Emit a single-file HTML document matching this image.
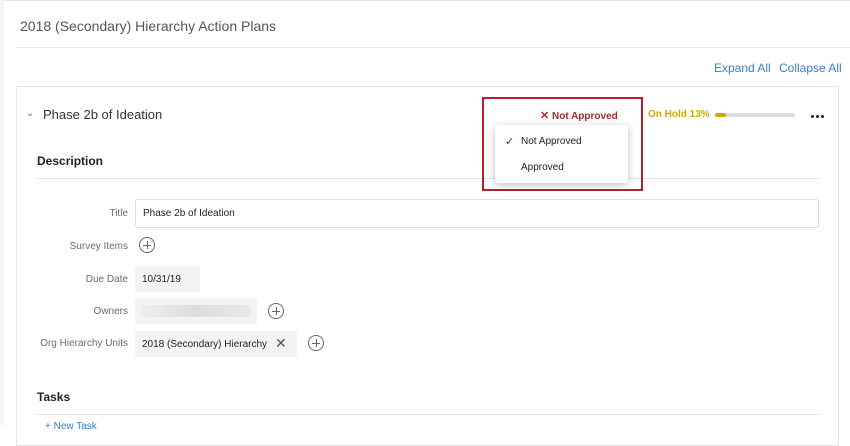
<!DOCTYPE html>
<html><head><style>
*{margin:0;padding:0;box-sizing:border-box}
body{width:850px;height:425px;overflow:hidden;background:#fff;font-family:"Liberation Sans",sans-serif;position:relative;color:#333}
.a{position:absolute;white-space:nowrap}
.lbl{font-size:10px;color:#6b6b6b;text-align:right;width:128px;left:0}
.plus{position:absolute;width:16px;height:16px;border:1px solid #666;border-radius:50%}
.plus:before{content:"";position:absolute;left:3px;top:7px;width:8px;height:1px;background:#666}
.plus:after{content:"";position:absolute;left:7px;top:3px;width:1px;height:8px;background:#666}
.dot{position:absolute;width:3px;height:3px;border-radius:50%;background:#222;top:115px}
</style></head><body>
<div class="a" style="left:0;top:0;width:4px;height:425px;background:#f4f4f4"></div>
<div class="a" style="left:4px;top:0;width:846px;height:1px;background:#e6e6e6"></div>
<div class="a" style="left:20px;top:18px;font-size:14px;color:#555">2018 (Secondary) Hierarchy Action Plans</div>
<div class="a" style="left:16px;top:47px;width:834px;height:1px;background:#e8e8e8"></div>
<div class="a" style="left:714px;top:61px;font-size:12px;color:#3b7fc4">Expand All</div>
<div class="a" style="left:779px;top:61px;font-size:12px;color:#3b7fc4">Collapse All</div>
<div class="a" style="left:16px;top:86px;width:823px;height:360px;border:1px solid #e6e6e6"></div>
<div class="a" style="left:26px;top:108px;font-size:10px;color:#777">&#8964;</div>
<div class="a" style="left:43px;top:107px;font-size:13px;color:#333">Phase 2b of Ideation</div>
<div class="a" style="left:37px;top:154px;font-size:12px;font-weight:bold;color:#222">Description</div>
<div class="a" style="left:37px;top:178px;width:782px;height:1px;background:#e3e3e3"></div>
<div class="a lbl" style="top:208px">Title</div>
<div class="a" style="left:135px;top:199px;width:684px;height:29px;border:1px solid #ddd;border-radius:3px;font-size:10px;padding:8px 7px;color:#222">Phase 2b of Ideation</div>
<div class="a lbl" style="top:241px">Survey Items</div>
<div class="plus" style="left:139px;top:237px"></div>
<div class="a lbl" style="top:274px">Due Date</div>
<div class="a" style="left:135px;top:266px;width:65px;height:26px;background:#f3f3f3;border-radius:2px;font-size:10px;padding:8px 7px;color:#222">10/31/19</div>
<div class="a lbl" style="top:306px">Owners</div>
<div class="a" style="left:135px;top:298px;width:122px;height:26px;background:#f3f3f3;border-radius:2px"><div style="margin:7px 6px;height:12px;background:linear-gradient(90deg,#eee,#ddd,#e8e8e8);border-radius:4px"></div></div>
<div class="plus" style="left:268px;top:303px"></div>
<div class="a lbl" style="top:338px">Org Hierarchy Units</div>
<div class="a" style="left:135px;top:331px;width:162px;height:26px;background:#f3f3f3;border-radius:2px;font-size:10px;padding:8px 7px;color:#222">2018 (Secondary) Hierarchy<span style="position:absolute;left:140px;top:4px;font-size:14px;color:#555">&#10005;</span></div>
<div class="plus" style="left:308px;top:335px"></div>
<div class="a" style="left:37px;top:390px;font-size:12px;font-weight:bold;color:#222">Tasks</div>
<div class="a" style="left:37px;top:414px;width:782px;height:1px;background:#e3e3e3"></div>
<div class="a" style="left:45px;top:421px;font-size:10px;color:#3b7fc4">+ New Task</div>

<div class="a" style="left:540px;top:109px;font-size:10px;color:#a52a2a;font-weight:bold"><span style="font-size:11px">&#10005;</span> Not Approved</div>
<div class="a" style="left:648px;top:109px;font-size:10px;color:#d4a800;font-weight:bold">On Hold 13%</div>
<div class="a" style="left:715px;top:113px;width:80px;height:4px;background:#ddd;border-radius:2px"><div style="width:11px;height:4px;background:#d4a800;border-radius:2px"></div></div>
<div class="dot" style="left:811px"></div><div class="dot" style="left:816px"></div><div class="dot" style="left:821px"></div>
<div class="a" style="left:495px;top:125px;width:133px;height:58px;background:#fff;border-radius:3px;box-shadow:0 2px 8px rgba(0,0,0,.25)"></div>
<div class="a" style="left:505px;top:135px;font-size:11px;color:#333">&#10003;</div>
<div class="a" style="left:521px;top:136px;font-size:10px;color:#222">Not Approved</div>
<div class="a" style="left:521px;top:162px;font-size:10px;color:#222">Approved</div>
<div class="a" style="left:482px;top:97px;width:161px;height:94px;border:2px solid #b5202e"></div>
</body></html>
